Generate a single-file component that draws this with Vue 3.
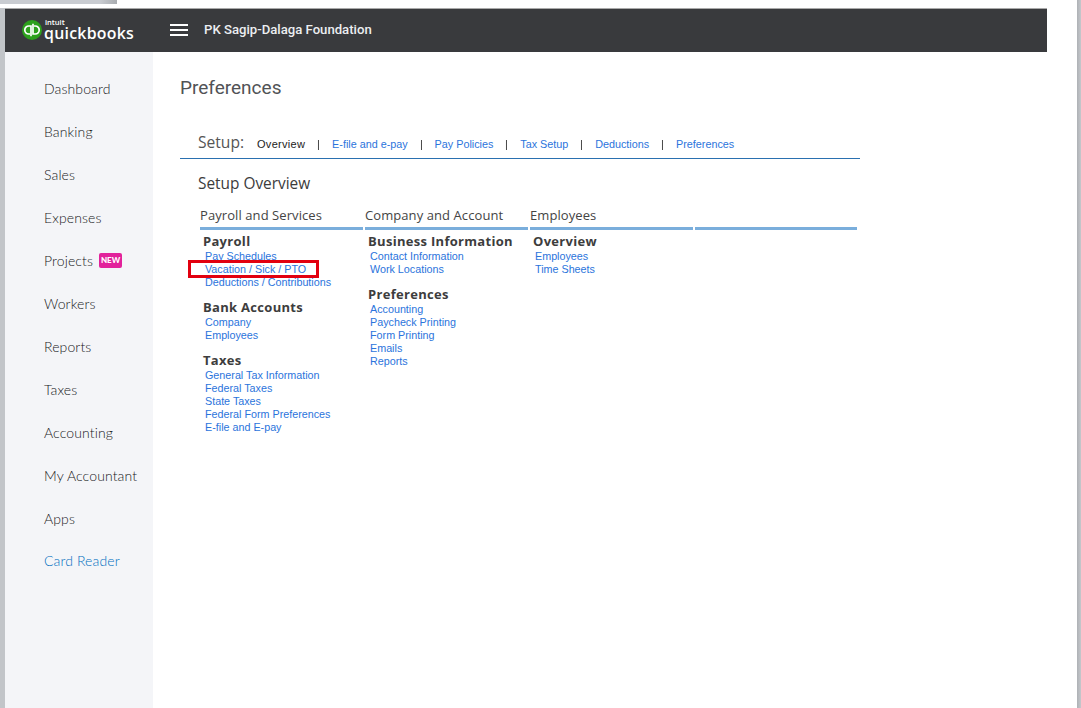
<script setup>
const navItems = [
  { label: 'Dashboard' },
  { label: 'Banking' },
  { label: 'Sales' },
  { label: 'Expenses' },
  { label: 'Projects', badge: 'NEW' },
  { label: 'Workers' },
  { label: 'Reports' },
  { label: 'Taxes' },
  { label: 'Accounting' },
  { label: 'My Accountant' },
  { label: 'Apps' },
  { label: 'Card Reader', accent: true }
]

const tabs = ['E-file and e-pay', 'Pay Policies', 'Tax Setup', 'Deductions', 'Preferences']

const columns = [
  {
    title: 'Payroll and Services',
    groups: [
      { name: 'Payroll', links: ['Pay Schedules', 'Vacation / Sick / PTO', 'Deductions / Contributions'] },
      { name: 'Bank Accounts', links: ['Company', 'Employees'] },
      { name: 'Taxes', links: ['General Tax Information', 'Federal Taxes', 'State Taxes', 'Federal Form Preferences', 'E-file and E-pay'] }
    ]
  },
  {
    title: 'Company and Account',
    groups: [
      { name: 'Business Information', links: ['Contact Information', 'Work Locations'] },
      { name: 'Preferences', links: ['Accounting', 'Paycheck Printing', 'Form Printing', 'Emails', 'Reports'] }
    ]
  },
  {
    title: 'Employees',
    groups: [{ name: 'Overview', links: ['Employees', 'Time Sheets'] }]
  },
  { title: '', groups: [] }
]
</script>

<template>
  <div class="window">
    <div class="chrome-top"></div>
    <div class="app">
      <header class="topbar">
        <div class="logo">
          <svg class="qb-mark" viewBox="0 0 20 20" width="20" height="20">
            <circle cx="10" cy="10" r="10" fill="#2ca01c" />
            <path d="M9 16.2V6H6.8a4 4 0 0 0 0 8H8" fill="none" stroke="#fff" stroke-width="1.7" />
            <path d="M11 3.8V14h2.2a4 4 0 0 0 0-8H12" fill="none" stroke="#fff" stroke-width="1.7" />
          </svg>
          <div class="wordmark">
            <span class="intuit">intuit</span>
            <span class="qb-text">quickbooks</span>
          </div>
        </div>
        <button class="burger" aria-label="Menu"><i></i><i></i><i></i></button>
        <span class="company">PK Sagip-Dalaga Foundation</span>
      </header>

      <div class="body">
        <nav class="sidebar">
          <a v-for="item in navItems" :key="item.label" class="nav-item" :class="{ accent: item.accent }">
            {{ item.label }}
            <span v-if="item.badge" class="badge">{{ item.badge }}</span>
          </a>
        </nav>

        <main class="content">
          <h1 class="page-title">Preferences</h1>

          <div class="setup-bar">
            <span class="setup-label">Setup:</span>
            <span class="tab current">Overview</span>
            <template v-for="tab in tabs" :key="tab">
              <span class="sep">|</span>
              <a class="tab">{{ tab }}</a>
            </template>
          </div>

          <h2 class="overview-title">Setup Overview</h2>

          <div class="columns">
            <section v-for="(col, i) in columns" :key="i" class="column">
              <h3 class="col-title">{{ col.title }}</h3>
              <div v-for="group in col.groups" :key="group.name" class="group">
                <h4 class="group-name">{{ group.name }}</h4>
                <a v-for="link in group.links" :key="link" class="link" :class="{ flagged: link === 'Vacation / Sick / PTO' }">{{ link }}</a>
              </div>
            </section>
          </div>
        </main>
      </div>
    </div>
    <div class="chrome-right"></div>
  </div>
</template>

<style>
html, body { margin: 0; background: #fff; overflow: hidden; }
</style>

<style scoped>
.window {
  position: relative;
  width: 1081px;
  height: 708px;
  overflow: hidden;
  background: #fff;
  font-family: "Liberation Sans", Arial, sans-serif;
}

.chrome-top {
  position: absolute;
  top: 0;
  left: 0;
  width: 117px;
  height: 4px;
  background: linear-gradient(90deg, #c9ccd1 85%, #a9acb0);
}

.chrome-right {
  position: absolute;
  top: 0;
  right: 0;
  width: 4px;
  height: 708px;
  background: linear-gradient(90deg, #aeb1b5, #c5c8cc);
}

.app {
  position: absolute;
  top: 8px;
  left: 0;
  width: 1047px;
  height: 700px;
  border-left: 5px solid #c2c5c9;
  box-sizing: border-box;
  display: flex;
  flex-direction: column;
}

.topbar {
  height: 44px;
  flex: none;
  box-sizing: border-box;
  display: flex;
  align-items: center;
  padding-bottom: 2px;
  background: #393a3d;
  border-top: 1px solid #a9a9a9;
}

.logo {
  display: flex;
  align-items: center;
  margin-left: 17px;
  width: 148px;
}

.qb-mark { flex: none; }

.wordmark {
  display: flex;
  flex-direction: column;
  margin-left: 2px;
  color: #fff;
}

.intuit {
  font-family: "Open Sans", sans-serif;
  font-size: 7.5px;
  font-weight: 600;
  line-height: 7px;
  margin-left: 1px;
}

.qb-text {
  font-family: "Open Sans", sans-serif;
  font-size: 15.9px;
  font-weight: 600;
  line-height: 14px;
  letter-spacing: 0.25px;
}

.burger {
  width: 18px;
  height: 12px;
  padding: 0;
  border: 0;
  background: none;
  display: flex;
  flex-direction: column;
  justify-content: space-between;
}

.burger i {
  display: block;
  height: 2px;
  background: #fff;
}

.company {
  margin-left: 16px;
  color: #eceef1;
  font-family: Roboto, sans-serif;
  font-size: 13.15px;
  font-weight: 500;
}

.body {
  flex: 1;
  display: flex;
  min-height: 0;
}

.sidebar {
  width: 148px;
  flex: none;
  background: #f4f5f8;
  box-sizing: border-box;
  padding-top: 15px;
  display: flex;
  flex-direction: column;
}

.nav-item {
  height: 43px;
  flex: none;
  display: flex;
  align-items: center;
  padding-left: 39px;
  color: #17181a;
  font-family: Lato, sans-serif;
  font-size: 14px;
  font-weight: 300;
  letter-spacing: 0.12px;
  white-space: nowrap;
}

.nav-item.accent {
  margin-top: -1px;
  color: #006fc0;
}

.badge {
  margin-left: 6px;
  width: 23px;
  background: #e2229b;
  color: #fff;
  border-radius: 2px;
  font-size: 8px;
  font-weight: 900;
  line-height: 15px;
  letter-spacing: 0;
  text-align: center;
}

.content {
  flex: 1;
  padding-left: 27px;
  min-width: 0;
}

.page-title {
  margin: 24px 0 0;
  height: 24px;
  color: #515356;
  font-family: Roboto, sans-serif;
  font-size: 19px;
  font-weight: 400;
  line-height: 24px;
}

.setup-bar {
  width: 680px;
  height: 28px;
  margin-top: 31px;
  box-sizing: border-box;
  display: flex;
  align-items: baseline;
  padding-left: 18px;
  border-bottom: 1px solid #2a70b0;
  line-height: 22px;
}

.setup-label {
  width: 59px;
  color: #555;
  font-family: "Open Sans", sans-serif;
  font-size: 15.6px;
}

.tab {
  color: #2b74dc;
  font-size: 10.8px;
}

.tab.current {
  color: #222;
  font-size: 11px;
  letter-spacing: 0.3px;
}

.sep {
  color: #333;
  font-size: 11px;
  margin: 0 12px;
  will-change: transform;
}

.overview-title {
  margin: 15px 0 0 18px;
  height: 20px;
  color: #3c3c3c;
  font-family: "Open Sans", sans-serif;
  font-size: 15.4px;
  font-weight: 400;
  line-height: 20px;
}

.columns {
  display: flex;
  gap: 2px;
  margin: 12px 0 0 20px;
}

.column {
  width: 163px;
  flex: none;
}

.column:last-child { width: 162px; }

.col-title {
  margin: 0;
  height: 24px;
  box-sizing: border-box;
  border-bottom: 3px solid #7aaedc;
  color: #444;
  font-family: "Open Sans", sans-serif;
  font-size: 13px;
  font-weight: 500;
  line-height: 18px;
  letter-spacing: 0.08px;
  white-space: nowrap;
}

.group {
  padding-left: 3px;
  margin-bottom: 10px;
}

.col-title + .group { margin-top: 2.5px; }

.group-name {
  margin: 0;
  color: #3d3d3d;
  font-family: "Open Sans", sans-serif;
  font-size: 13px;
  font-weight: 700;
  line-height: 17px;
  letter-spacing: 0.3px;
  white-space: nowrap;
}

.link {
  display: block;
  padding-left: 2px;
  color: #2b74dc;
  font-size: 10.75px;
  line-height: 13px;
  white-space: nowrap;
}

.flagged {
  position: relative;
}

.flagged::after {
  content: "";
  position: absolute;
  left: -15px;
  top: -3px;
  width: 131px;
  height: 18px;
  box-sizing: border-box;
  border: 3px solid #e2000f;
}
</style>
